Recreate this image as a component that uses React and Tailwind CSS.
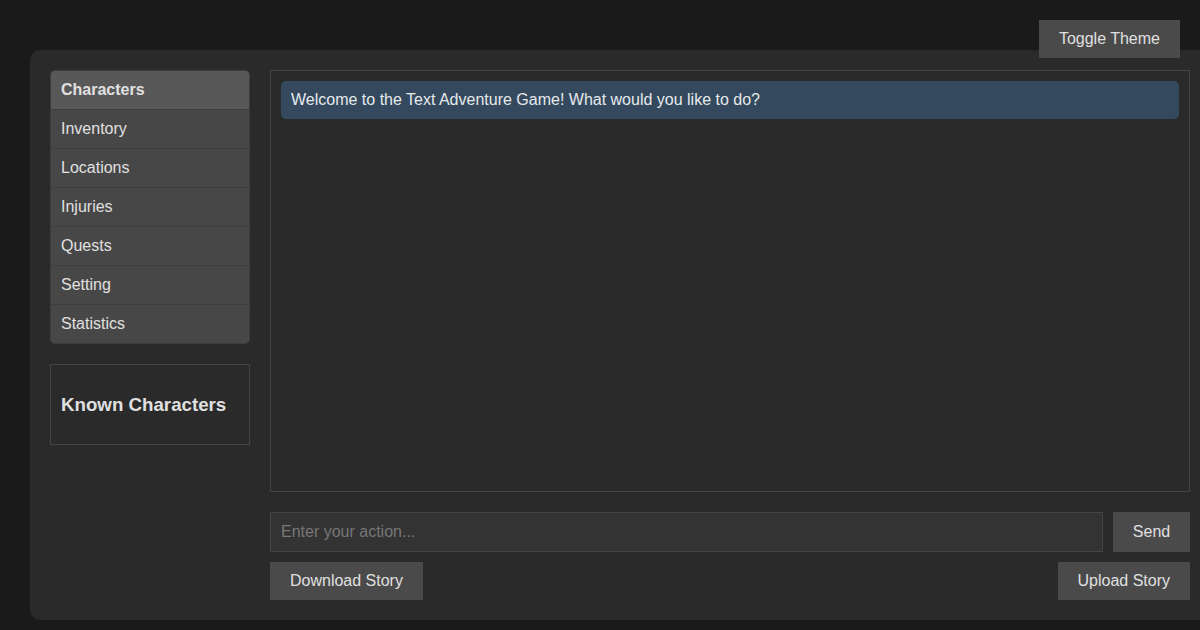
import React, { useState } from "react";

const TABS = ["Characters", "Inventory", "Locations", "Injuries", "Quests", "Setting", "Statistics"];

const FONT = { fontFamily: '"Liberation Sans", Arial, sans-serif' };

const App = () => {
  const [active, setActive] = useState("Characters");
  const [action, setAction] = useState("");

  return (
    <div
      className="relative min-h-screen w-[1200px] h-[630px] overflow-hidden bg-[#1a1a1a] text-[#e0e0e0] text-base leading-[18px]"
      style={FONT}
    >
      {/* Theme toggle */}
      <button className="absolute top-[20px] right-[20px] z-10 bg-[#4a4a4a] text-[#e0e0e0] px-5 py-[10px] leading-[18px]">
        Toggle Theme
      </button>

      {/* Main container */}
      <div className="ml-[30px] pt-[50px]">
        <div className="w-[1180px] bg-[#2a2a2a] rounded-[10px] p-5 flex gap-5">
          {/* Sidebar */}
          <div className="w-[200px] shrink-0 flex flex-col gap-5">
            <div className="rounded-[5px] overflow-hidden bg-[#474747] border border-[#3c3c3c]">
              {TABS.map((tab, i) => (
                <div
                  key={tab}
                  onClick={() => setActive(tab)}
                  className={`px-[10px] py-[10px] leading-[18px] cursor-pointer ${
                    i < TABS.length - 1 ? "border-b border-[#3e3e3e]" : ""
                  } ${active === tab ? "bg-[#585858] font-bold" : "bg-[#474747]"}`}
                >
                  {tab}
                </div>
              ))}
            </div>

            <div className="border border-[#444] px-[10px] py-[10px]">
              <h3 className="my-[18.72px] text-[18.72px] leading-[21.5px] font-bold">Known Characters</h3>
            </div>
          </div>

          {/* Story area */}
          <div className="w-[920px] shrink-0 flex flex-col">
            <div className="h-[422px] border border-[#444] p-[10px]">
              <div className="bg-[#34495e] rounded-[5px] px-[10px] py-[10px] leading-[18px] text-[#e6e9ec]">
                Welcome to the Text Adventure Game! What would you like to do?
              </div>
            </div>

            <div className="mt-5 flex gap-[10px]">
              <input
                value={action}
                onChange={(e) => setAction(e.target.value)}
                placeholder="Enter your action..."
                className="flex-1 h-[40px] bg-[#333] border border-[#444] px-[10px] text-base text-[#e0e0e0] placeholder:text-[#777] outline-none"
                style={FONT}
              />
              <button className="w-[77px] h-[40px] bg-[#4a4a4a] text-[#e0e0e0]">Send</button>
            </div>

            <div className="mt-[10px] flex justify-between">
              <button className="bg-[#4a4a4a] text-[#e0e0e0] px-5 py-[10px] leading-[18px]">Download Story</button>
              <button className="bg-[#4a4a4a] text-[#e0e0e0] px-5 py-[10px] leading-[18px]">Upload Story</button>
            </div>
          </div>
        </div>
      </div>
    </div>
  );
};

export default App;
